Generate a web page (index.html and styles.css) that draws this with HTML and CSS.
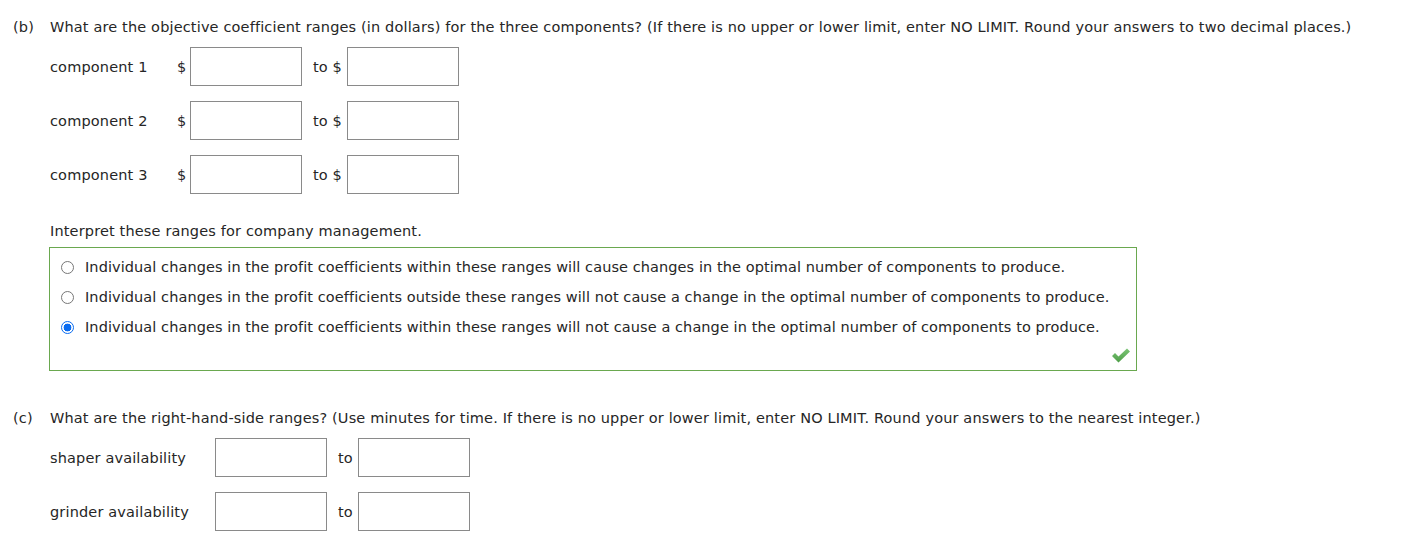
FILE: index.html
```html
<!DOCTYPE html>
<html>
<head>
<meta charset="utf-8">
<link rel="stylesheet" href="styles.css">
</head>
<body>
<div class="part part-b">
  <div class="part-label">(b)</div>
  <div class="part-body">
    <div class="question">What are the objective coefficient ranges (in dollars) for the three components? (If there is no upper or lower limit, enter NO LIMIT. Round your answers to two decimal places.)</div>
    <div class="range-rows">
      <div class="range-row">
        <span class="row-label comp">component 1</span>
        <span class="cur">$</span><span class="field"></span>
        <span class="to">to $</span><span class="field"></span>
      </div>
      <div class="range-row">
        <span class="row-label comp">component 2</span>
        <span class="cur">$</span><span class="field"></span>
        <span class="to">to $</span><span class="field"></span>
      </div>
      <div class="range-row">
        <span class="row-label comp">component 3</span>
        <span class="cur">$</span><span class="field"></span>
        <span class="to">to $</span><span class="field"></span>
      </div>
    </div>
    <div class="interpret">Interpret these ranges for company management.</div>
    <div class="choice-box">
      <label class="choice"><span class="radio"></span>Individual changes in the profit coefficients within these ranges will cause changes in the optimal number of components to produce.</label>
      <label class="choice"><span class="radio"></span>Individual changes in the profit coefficients outside these ranges will not cause a change in the optimal number of components to produce.</label>
      <label class="choice"><span class="radio checked"></span>Individual changes in the profit coefficients within these ranges will not cause a change in the optimal number of components to produce.</label>
      <div class="check-row">
        <svg class="check" width="20" height="16" viewBox="0 0 20 16">
          <defs>
            <linearGradient id="g" x1="0" y1="0" x2="0" y2="1">
              <stop offset="0" stop-color="#7cc576"/>
              <stop offset="1" stop-color="#4e9e48"/>
            </linearGradient>
          </defs>
          <path d="M1 8 L4 5 L7.5 8.5 L16 0.5 L19 3.5 L7.5 14.5 Z" fill="url(#g)"/>
        </svg>
      </div>
    </div>
  </div>
</div>
<div class="part part-c">
  <div class="part-label">(c)</div>
  <div class="part-body">
    <div class="question">What are the right-hand-side ranges? (Use minutes for time. If there is no upper or lower limit, enter NO LIMIT. Round your answers to the nearest integer.)</div>
    <div class="range-rows">
      <div class="range-row">
        <span class="row-label avail">shaper availability</span>
        <span class="field"></span>
        <span class="to to-c">to</span><span class="field"></span>
      </div>
      <div class="range-row">
        <span class="row-label avail">grinder availability</span>
        <span class="field"></span>
        <span class="to to-c">to</span><span class="field"></span>
      </div>
    </div>
  </div>
</div>
</body>
</html>
```
FILE: styles.css
```css
html, body {
  margin: 0;
  padding: 0;
  background: #fff;
}
body {
  font-family: "DejaVu Sans", Verdana, sans-serif;
  font-size: 14.5px;
  letter-spacing: 0.15px;
  line-height: 18px;
  color: #262626;
  padding: 18px 0 0 13px;
}
.part {
  display: flex;
}
.part-label {
  width: 37px;
  flex: none;
}
.part-body {
  flex: none;
}
.question {
  white-space: nowrap;
}
.range-rows {
  margin-top: 11px;
  display: flex;
  flex-direction: column;
  gap: 15px;
}
.range-row {
  display: flex;
  align-items: center;
  height: 39px;
}
.row-label.comp { width: 127px; }
.row-label.avail { width: 165px; }
.cur { width: 13px; }
.to { margin-left: 11px; width: 34px; }
.to-c { width: 20px; }
.field {
  box-sizing: border-box;
  width: 112px;
  height: 39px;
  border: 1px solid #8a8a8a;
  background: #fff;
}
.interpret {
  margin-top: 28px;
}
.choice-box {
  margin-top: 7px;
  margin-left: -1px;
  width: 1088px;
  box-sizing: border-box;
  border: 1px solid #6aa84f;
  padding: 4px 0 0 11px;
}
.choice {
  display: flex;
  align-items: center;
  height: 30px;
  white-space: nowrap;
  letter-spacing: 0.08px;
}
.radio {
  box-sizing: border-box;
  width: 13px;
  height: 13px;
  border: 1px solid #777;
  border-radius: 50%;
  margin-right: 11px;
  background: #fff;
  flex: none;
}
.radio.checked {
  border: 1px solid #0a6cf0;
  background: radial-gradient(circle, #0a6cf0 0 3.6px, #fff 4.2px);
}
.check-row {
  display: flex;
  justify-content: flex-end;
  height: 28px;
  padding-right: 5px;
}
.check {
  margin-top: 6px;
}
.part-c {
  margin-top: 38px;
}
```
